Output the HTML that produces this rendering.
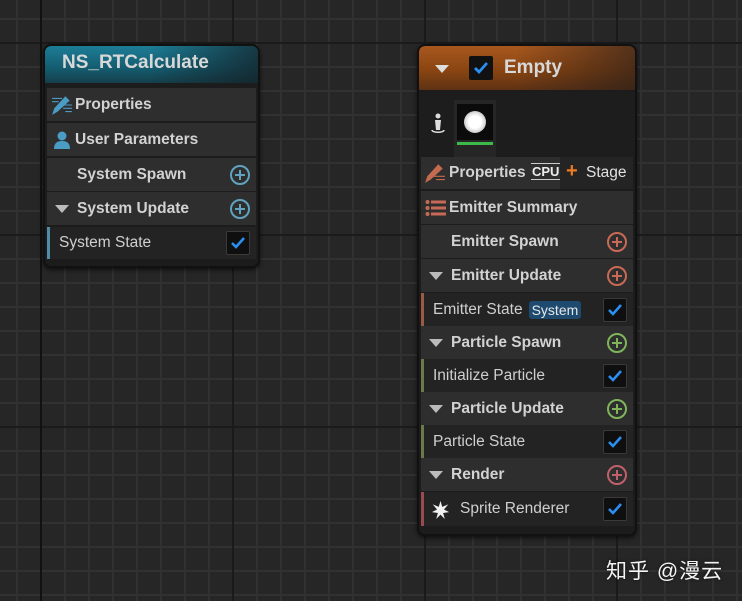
<!DOCTYPE html>
<html><head><meta charset="utf-8"><style>
*{margin:0;padding:0;box-sizing:border-box}
body{width:742px;height:601px;overflow:hidden;position:relative;font-family:"Liberation Sans",sans-serif;
background-color:#262626;
background-image:
linear-gradient(90deg,rgba(0,0,0,0) 40px,#111 40px,#111 42px,rgba(0,0,0,0) 42px),
linear-gradient(90deg,rgba(0,0,0,0) 232px,#1a1a1a 232px,#1a1a1a 234px,rgba(0,0,0,0) 234px),
linear-gradient(90deg,rgba(0,0,0,0) 424px,#1a1a1a 424px,#1a1a1a 426px,rgba(0,0,0,0) 426px),
linear-gradient(90deg,rgba(0,0,0,0) 616px,#1a1a1a 616px,#1a1a1a 618px,rgba(0,0,0,0) 618px),
linear-gradient(180deg,rgba(0,0,0,0) 42px,#1a1a1a 42px,#1a1a1a 44px,rgba(0,0,0,0) 44px),
linear-gradient(180deg,rgba(0,0,0,0) 234px,#1a1a1a 234px,#1a1a1a 236px,rgba(0,0,0,0) 236px),
linear-gradient(180deg,rgba(0,0,0,0) 426px,#1a1a1a 426px,#1a1a1a 428px,rgba(0,0,0,0) 428px),
linear-gradient(90deg,#313131 2px,transparent 2px),
linear-gradient(180deg,#313131 2px,transparent 2px);
background-size:742px 601px,742px 601px,742px 601px,742px 601px,742px 601px,742px 601px,742px 601px,24px 24px,24px 24px;
background-position:0 0,0 0,0 0,0 0,0 0,0 0,0 0,-8px 0,0 -6px;}
.node{position:absolute;background:#1c1c1c;border:2px solid #111;border-radius:8px;box-shadow:0 2px 4px rgba(0,0,0,.6);overflow:hidden}
.hdr{position:absolute;left:0;right:0;top:0;border-radius:6px 6px 0 0;color:#d8d8d8;font-weight:bold;font-size:19px}
.row{position:absolute;left:2px;right:2px;background:#2e2e2e;color:#d2d2d2;font-weight:bold;font-size:15.5px;display:flex;align-items:center}
.it{background:#232323;font-weight:normal;color:#cfcfcf}
.bar{position:absolute;left:0;top:0;bottom:0;width:3px}
.plus{position:absolute;right:6px;top:50%;margin-top:-10px;width:20px;height:20px;border-radius:50%;border:2px solid}
.plus:before,.plus:after{content:"";position:absolute;left:50%;top:50%;background:currentColor}
.plus:before{width:10px;height:2px;margin:-1px 0 0 -5px}
.plus:after{width:2px;height:10px;margin:-5px 0 0 -1px}
.chk{position:absolute;right:6px;top:50%;margin-top:-12px;width:24px;height:24px;background:#0f0f0f;border:1px solid #3a3a3a;border-radius:2px}
.tri{width:0;height:0;border-left:7px solid transparent;border-right:7px solid transparent;border-top:8px solid #bbb;position:absolute;left:8px}
</style></head><body>

<!-- Node 1 -->
<div class="node" style="left:43px;top:44px;width:217px;height:224px">
 <div class="hdr" style="height:37px;background:linear-gradient(180deg,#1c7d96 0%,#145c70 60%,#153f4a 100%),#186a80;">
  <div style="position:absolute;inset:0;background:linear-gradient(90deg,rgba(0,0,0,0) 50%,rgba(20,30,35,.7) 100%)"></div>
  <span style="position:absolute;left:17px;top:6px">NS_RTCalculate</span></div>
 <div class="row" style="top:42px;height:33px"><svg style="position:absolute;left:4px" width="22" height="22" viewBox="0 0 20 20"><path d="M1 19l2-6 10-11 4 4-11 10z" fill="#4a9cc4"/><path d="M9 10h10M11 13h8M13 16h6M1 4h9M1 7h6" stroke="#4a9cc4" stroke-width="1"/></svg><span style="margin-left:28px">Properties</span></div>
 <div class="row" style="top:77px;height:33px"><svg style="position:absolute;left:5px" width="20" height="20" viewBox="0 0 20 20"><circle cx="10" cy="6" r="4.5" fill="#4a9cc4"/><path d="M2 19c0-6 3-8 8-8s8 2 8 8z" fill="#4a9cc4"/></svg><span style="margin-left:28px">User Parameters</span></div>
 <div class="row" style="top:112px;height:33px"><span style="margin-left:30px">System Spawn</span><div class="plus" style="color:#5fa3bf;border-color:#5fa3bf"></div></div>
 <div class="row" style="top:146px;height:33px"><div class="tri"></div><span style="margin-left:30px">System Update</span><div class="plus" style="color:#5fa3bf;border-color:#5fa3bf"></div></div>
 <div class="row it" style="top:181px;height:32px"><div class="bar" style="background:#4f8ca6"></div><span style="margin-left:12px">System State</span><div class="chk"><svg width="22" height="22" viewBox="0 0 22 22"><path d="M5 11l4 4 8-9" stroke="#2b8ef0" stroke-width="2.6" fill="none"/></svg></div></div>
</div>

<!-- Node 2 -->
<div class="node" style="left:417px;top:44px;width:220px;height:492px">
 <div class="hdr" style="height:44px;background:linear-gradient(180deg,#a8581e 0%,#8a4512 55%,#5e3214 100%)">
  <div style="position:absolute;inset:0;background:linear-gradient(90deg,rgba(0,0,0,0) 45%,rgba(40,30,25,.65) 100%)"></div>
  <div class="tri" style="left:16px;top:19px;border-top-color:#ddd"></div>
  <div style="position:absolute;left:50px;top:10px;width:24px;height:24px;background:#111;border-radius:2px"><svg width="24" height="24" viewBox="0 0 24 24"><path d="M6 12l4 4 8-9" stroke="#2b8ef0" stroke-width="2.8" fill="none"/></svg></div>
  <span style="position:absolute;left:85px;top:11px">Empty</span></div>
 <div style="position:absolute;left:0;right:0;top:46px;height:64px;background:#1d1d1d">
  <svg style="position:absolute;left:11px;top:21px" width="16" height="22" viewBox="0 0 16 22"><circle cx="8" cy="3" r="2.5" fill="#ddd"/><path d="M5 7h6l-1 10h-4z" fill="#ddd"/><path d="M2 17c0 3 12 3 12 0" stroke="#ddd" stroke-width="1.5" fill="none"/></svg>
  <div style="position:absolute;left:35px;top:8px;width:42px;height:57px;background:#262626"></div>
  <div style="position:absolute;left:38px;top:12px;width:36px;height:36px;background:#0b0b0b"></div>
  <div style="position:absolute;left:45px;top:19px;width:22px;height:22px;border-radius:50%;background:radial-gradient(circle,#fff 40%,#bbb 80%,#555 100%)"></div>
  <div style="position:absolute;left:38px;top:50px;width:36px;height:3px;background:#3dbb4a"></div>
 </div>
 <div class="row" style="top:111px;height:32px"><svg style="position:absolute;left:3px" width="22" height="22" viewBox="0 0 20 20"><path d="M1 19l2-6 10-11 4 4-11 10z" fill="#c46a4e"/><path d="M9 13h10M11 16h8" stroke="#c46a4e" stroke-width="1"/></svg><span style="margin-left:28px">Properties</span>
  <span style="position:absolute;left:110px;top:6px;font-size:13px;font-weight:bold;color:#eee;border-top:1px solid #ccc;border-bottom:1px solid #ccc;line-height:15px;padding:0 1px">CPU</span>
  <div style="position:absolute;left:139px;top:0;bottom:0;right:0;background:#242424"></div>
  <span style="position:absolute;left:145px;top:3px;color:#f07a22;font-size:20px;font-weight:bold">+</span>
  <span style="position:absolute;left:165px;top:7px;font-weight:normal;color:#e0e0e0">Stage</span></div>
 <div class="row" style="top:145px;height:33px"><svg style="position:absolute;left:4px" width="22" height="18" viewBox="0 0 22 18"><g fill="#c66a55"><circle cx="2.5" cy="3" r="2"/><circle cx="2.5" cy="9" r="2"/><circle cx="2.5" cy="15" r="2"/><rect x="6" y="1.5" width="15" height="3"/><rect x="6" y="7.5" width="15" height="3"/><rect x="6" y="13.5" width="15" height="3"/></g></svg><span style="margin-left:28px">Emitter Summary</span></div>
 <div class="row" style="top:179px;height:33px"><span style="margin-left:30px">Emitter Spawn</span><div class="plus" style="color:#c86a55;border-color:#c86a55"></div></div>
 <div class="row" style="top:213px;height:33px"><div class="tri"></div><span style="margin-left:30px">Emitter Update</span><div class="plus" style="color:#c86a55;border-color:#c86a55"></div></div>
 <div class="row it" style="top:247px;height:33px"><div class="bar" style="background:#9a5a44"></div><span style="margin-left:12px">Emitter State</span><span style="margin-left:6px;background:#1d4a6e;color:#e8e8e8;font-size:14px;padding:1px 3px;border-radius:3px">System</span><div class="chk"><svg width="22" height="22" viewBox="0 0 22 22"><path d="M5 11l4 4 8-9" stroke="#2b8ef0" stroke-width="2.6" fill="none"/></svg></div></div>
 <div class="row" style="top:280px;height:33px"><div class="tri"></div><span style="margin-left:30px">Particle Spawn</span><div class="plus" style="color:#7fb55a;border-color:#7fb55a"></div></div>
 <div class="row it" style="top:313px;height:33px"><div class="bar" style="background:#6a7a4a"></div><span style="margin-left:12px">Initialize Particle</span><div class="chk"><svg width="22" height="22" viewBox="0 0 22 22"><path d="M5 11l4 4 8-9" stroke="#2b8ef0" stroke-width="2.6" fill="none"/></svg></div></div>
 <div class="row" style="top:346px;height:33px"><div class="tri"></div><span style="margin-left:30px">Particle Update</span><div class="plus" style="color:#7fb55a;border-color:#7fb55a"></div></div>
 <div class="row it" style="top:379px;height:33px"><div class="bar" style="background:#6a7a4a"></div><span style="margin-left:12px">Particle State</span><div class="chk"><svg width="22" height="22" viewBox="0 0 22 22"><path d="M5 11l4 4 8-9" stroke="#2b8ef0" stroke-width="2.6" fill="none"/></svg></div></div>
 <div class="row" style="top:412px;height:33px"><div class="tri"></div><span style="margin-left:30px">Render</span><div class="plus" style="color:#c0606a;border-color:#c0606a"></div></div>
 <div class="row it" style="top:446px;height:34px"><div class="bar" style="background:#9a4a50"></div><svg style="position:absolute;left:10px" width="19" height="19" viewBox="0 0 22 22"><path d="M11 1l2 7 7-3-5 6 6 3-7 1 2 7-5-5-5 5 2-7-7-1 6-3-5-6 7 3z" fill="#f2f2f2"/></svg><span style="margin-left:39px">Sprite Renderer</span><div class="chk"><svg width="22" height="22" viewBox="0 0 22 22"><path d="M5 11l4 4 8-9" stroke="#2b8ef0" stroke-width="2.6" fill="none"/></svg></div></div>
</div>

<div style="position:absolute;left:606px;top:555px;color:#f4f4f4;font-size:21px;letter-spacing:1px;font-family:'Liberation Sans','Noto Sans CJK SC',sans-serif;text-shadow:0 0 3px rgba(0,0,0,.6)">知乎 @漫云</div>
</body></html>
